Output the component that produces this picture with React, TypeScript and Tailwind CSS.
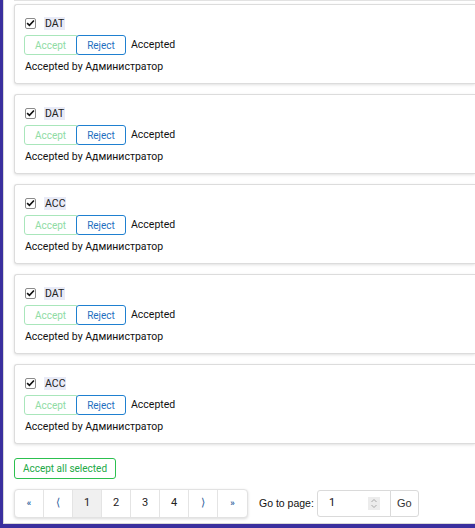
import React from "react";

const items = [
  { code: "DAT" },
  { code: "DAT" },
  { code: "ACC" },
  { code: "DAT" },
  { code: "ACC" },
];

function CheckBox() {
  return (
    <span className="ml-[1px] flex h-[11px] w-[11px] items-center justify-center rounded-[2px] border border-[#8a8a8a] bg-white">
      <svg viewBox="0 0 12 12" className="h-[10px] w-[10px]">
        <path d="M1.5 6.2 L4.6 9.2 L10.6 2.6" fill="none" stroke="#111" strokeWidth="2.2" />
      </svg>
    </span>
  );
}

function ItemCard({ code }: { code: string }) {
  return (
    <div className="h-[80px] rounded-l-[3px] border border-r-0 border-[#dcdcdc] bg-white pl-[9px] pt-[12px] shadow-[0_1px_3px_rgba(0,0,0,0.12)]">
      <div className="flex h-[12px] items-center gap-[8px]">
        <CheckBox />
        <span className="bg-[#e9ebf7] px-[1px] text-[10.5px] leading-[13px] text-[#222]">{code}</span>
      </div>
      <div className="mt-[6px] flex items-center">
        <button className="h-[20px] w-[53px] rounded-l-[3px] border border-[#a9e6bb] bg-white text-[10px] text-[#8fdca5]">
          Accept
        </button>
        <button className="-ml-px h-[20px] w-[50px] rounded-[3px] border border-[#1f80d0] bg-white text-[10px] text-[#1f6fc0]">
          Reject
        </button>
        <span className="ml-[5px] text-[10.5px] text-[#111]">Accepted</span>
      </div>
      <div className="mt-[5px] pl-[1px] text-[10.5px] leading-[14px] text-[#111]">Accepted by Администратор</div>
    </div>
  );
}

export default function App() {
  const pages = ["«", "⟨", "1", "2", "3", "4", "⟩", "»"];
  return (
    <div
      className="h-[528px] w-[475px] overflow-hidden bg-[#3a2f9e] pl-[3px]"
      style={{ fontFamily: "Roboto, 'Liberation Sans', Arial, sans-serif" }}
    >
      <div className="h-[524px] border-b border-l border-[#d8d8d8] bg-white pl-[10px]">
        <div className="h-[1px] border-b border-[#e2e2e2]" />
        <div className="flex flex-col gap-[10px] pt-[3px]">
          {items.map((it, i) => (
            <ItemCard key={i} code={it.code} />
          ))}
        </div>
        <div className="mt-[11px]">
          <button className="h-[21px] w-[102px] rounded-[3px] border border-[#2cc04f] bg-white text-[10px] text-[#22a846]">
            Accept all selected
          </button>
        </div>
        <div className="mt-[10px] flex items-center">
          <div className="flex h-[29px] overflow-hidden rounded-[4px] border border-[#e2e2e2] bg-white shadow-[0_1px_3px_rgba(0,0,0,0.15)]">
            {pages.map((p, i) => (
              <div
                key={i}
                className={
                  "flex h-full w-[29px] items-center justify-center border-r border-[#e4e4e4] text-[11px] last:border-r-0 " +
                  (p === "1" ? "bg-[#f0f0f0] text-[#222]" : i < 2 || i > 5 ? "text-[#2a5d9c]" : "text-[#222]")
                }
              >
                {p === "«" || p === "»" ? <span className="text-[9px] font-bold">{p}</span> : p}
              </div>
            ))}
          </div>
          <span
            className="ml-[11px] text-[10.5px] text-[#111]"
            style={{ fontFamily: "'Liberation Sans', Arial, sans-serif" }}
          >
            Go to page:
          </span>
          <div className="ml-[3px] flex h-[27px]">
            <div className="flex w-[74px] items-center rounded-l-[3px] border border-[#dadada] bg-white pl-[11px] pr-[10px]">
              <span className="flex-1 text-[11px] text-[#111]">1</span>
              <span className="flex h-[13px] w-[12px] items-center justify-center bg-[#ececec]">
                <svg viewBox="0 0 12 13" className="h-[13px] w-[12px]">
                  <path d="M3.5 5 L6 2.5 L8.5 5 M3.5 8 L6 10.5 L8.5 8" fill="none" stroke="#a0a0a0" strokeWidth="0.9" />
                </svg>
              </span>
            </div>
            <div
              className="-ml-px flex w-[29px] items-center justify-center rounded-r-[3px] border border-[#dadada] bg-white text-[11px] text-[#333]"
              style={{ fontFamily: "'Liberation Sans', Arial, sans-serif" }}
            >
              Go
            </div>
          </div>
        </div>
      </div>
    </div>
  );
}
